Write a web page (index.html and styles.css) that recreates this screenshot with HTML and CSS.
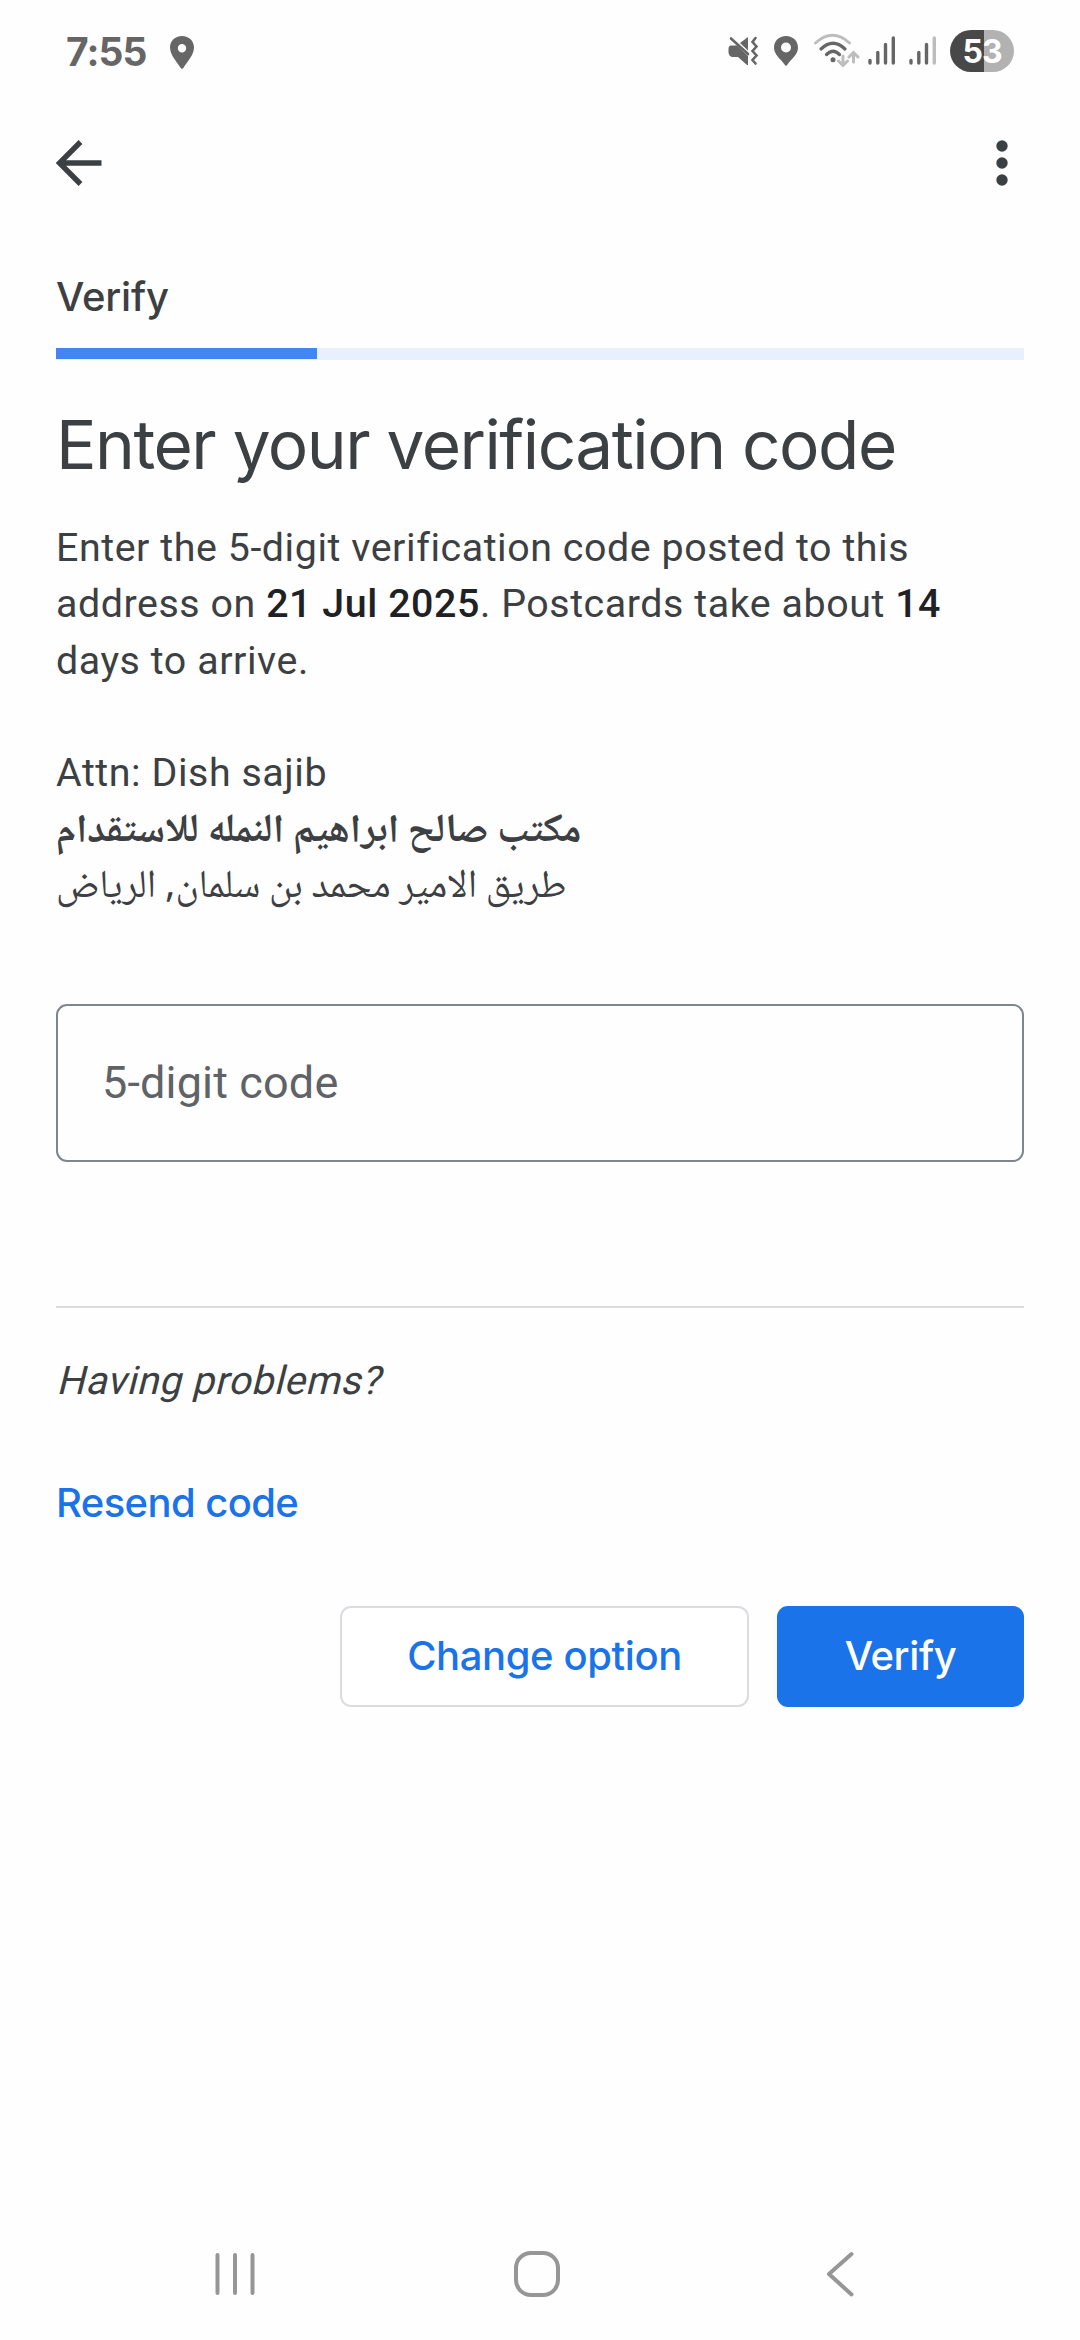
FILE: index.html
```html
<!DOCTYPE html>
<html lang="en">
<head>
<meta charset="utf-8">
<title>Verify</title>
<link rel="stylesheet" href="styles.css">
</head>
<body>
<header class="status">
  <span class="clock">7:55</span>
  <svg class="pin" width="24" height="33" viewBox="0 0 24 33"><path fill="#666" fill-rule="evenodd" d="M12 0C5 0 0 5 0 11.500C0 19 7 26 10.500 31.800Q12 34 13.500 31.800C17 26 24 19 24 11.500C24 5 19 0 12 0ZM12 8a4.200 4.200 0 1 1 0 8.400a4.200 4.200 0 1 1 0-8.400Z"/></svg>
  <svg class="indicators" width="212" height="40" viewBox="726 32 212 40" fill="none" stroke-linecap="round">
    <path fill="#666" d="M731 46.500h6l11 10.500v9h-1l-9-8h-6q-3-1-3.500-4v-4Q728.500 46.500 731 46.500ZM748 38v13.500l-8-7.500Z"/>
    <path stroke="#666" stroke-width="2.600" d="M731 39.500L748 55M755.500 39l-3 4 4 4.500-4 4.500 4 4.500-4 4.500 3 3.500"/>
    <path fill="#666" fill-rule="evenodd" d="M786 37c-7 0-12 5-12 11.500C774 56 781 60 784.500 65.500Q786 68 787.500 65.500C791 60 798 56 798 48.500C798 42 793 37 786 37ZM786 43.500a5 5 0 1 1 0 10a5 5 0 1 1 0-10Z"/>
    <path stroke="#bdbdbd" stroke-width="3" d="M815.500 44Q832.500 28.500 849.500 44M843 57v9m-4.500-4l4.500 4.500 4.500-4.500M853.500 63v-9m-4.500 4l4.500-4.500 4.500 4.500"/>
    <path stroke="#666" stroke-width="3.200" d="M821 50Q833 38.500 845 50M826.500 55.500Q833 49 839.500 55.500"/>
    <circle cx="833" cy="60.700" r="2.500" fill="#666"/>
    <path stroke="#666" stroke-width="3.400" d="M870 61.500v2.500M877.800 53.500v10.500M885.500 45.500v18.500M893.300 39v25M911 61.500v2.500M918.800 53.500v10.500M926.500 45.500v18.500"/>
    <path stroke="#bdbdbd" stroke-width="3.400" d="M934.300 39v25"/>
  </svg>
  <span class="battery">53</span>
</header>
<nav class="appbar">
  <svg width="46" height="46" viewBox="0 0 46 46" fill="none" stroke="#3c4043" stroke-width="5.400"><path d="M45.500 23H5M24.500 2L3.500 23l21 21"/></svg>
  <svg width="12" height="46" viewBox="0 0 12 46" fill="#3c4043"><circle cx="6" cy="6" r="5.700"/><circle cx="6" cy="23" r="5.700"/><circle cx="6" cy="40" r="5.700"/></svg>
</nav>
<main class="content">
  <div class="step">Verify</div>
  <div class="progress"><div class="progress-fill"></div></div>
  <h1 class="title">Enter your verification code</h1>
  <p class="body">Enter the 5-digit verification code posted to this<br>address on <b>21 Jul 2025</b>. Postcards take about <b>14</b><br>days to arrive.</p>
  <address class="address">
    <div class="line">Attn: Dish sajib</div>
    <div class="line arabic name" lang="ar" dir="rtl">مكتب صالح ابراهيم النمله للاستقدام</div>
    <div class="line arabic" lang="ar" dir="rtl">طريق الامير محمد بن سلمان, الرياض</div>
  </address>
  <div class="field">5-digit code</div>
  <hr class="rule">
  <p class="problems">Having problems?</p>
  <a class="resend">Resend code</a>
  <div class="actions">
    <button class="btn outline">Change option</button>
    <button class="btn solid">Verify</button>
  </div>
</main>
<footer class="sysnav">
  <svg width="640" height="50" viewBox="215 2249 640 50" fill="none" stroke="#969696" stroke-width="4" stroke-linecap="round" stroke-linejoin="round"><path d="M217.500 2255v38M235 2255v38M252.500 2255v38M851.500 2254L829 2274l22.500 20.500"/><rect x="516" y="2253" width="42" height="42" rx="15"/></svg>
</footer>
</body>
</html>
```
FILE: styles.css
```css
* { box-sizing: border-box; margin: 0; padding: 0; }
body {
  width: 1080px; height: 2340px; display: flex; flex-direction: column;
  background: #fefefe; color: #3c4043; font-family: Roboto, sans-serif; overflow: hidden;
}
.status { height: 102px; padding: 0 66px; display: flex; align-items: center; color: #666; font-family: Inter, sans-serif; }
.clock { width: 80px; font-size: 39px; font-weight: 700; letter-spacing: -.9px; white-space: nowrap; }
.pin { margin: 3px 0 0 24px; }
.indicators { margin-left: auto; margin-right: 12px; }
.battery {
  width: 64px; height: 42px; border-radius: 21px; display: flex; align-items: center; justify-content: center;
  background: linear-gradient(to right, #484848 34px, #b2b2b2 34px); color: #fff;
  font-size: 32px; font-weight: 700; letter-spacing: -1px;
}
.appbar { height: 121px; padding: 0 72px 0 56px; display: flex; align-items: center; justify-content: space-between; }
.content { padding: 0 56px; display: flex; flex-direction: column; }
.step { margin-top: 49px; height: 50px; font: 500 40px/50px Inter, sans-serif; letter-spacing: -.2px; }
.progress { margin-top: 26px; height: 12px; background: #e8f0fe; }
.progress-fill { width: 27%; height: 11px; background: #4285f4; }
.title { margin-top: 45px; font: 400 67.500px/80px Inter, sans-serif; letter-spacing: -1.500px; white-space: nowrap; }
.body, .address { font-size: 39.375px; line-height: 56.250px; letter-spacing: .56px; font-style: normal; }
.body { margin-top: 35px; white-space: nowrap; }
.body b { font-weight: 500; color: #202124; }
.address { margin-top: 56px; }
.line { height: 56.250px; }
.arabic { padding-top: 2px; font-family: "Noto Naskh Arabic UI", "Noto Naskh Arabic", Roboto, sans-serif; letter-spacing: 0; text-align: left; }
.name { padding-top: 3px; font-size: 39.800px; font-weight: 700; }
.field { margin-top: 90px; height: 158px; padding-left: 44px; border: 2px solid #80868b; border-radius: 11px; font-size: 45px; line-height: 154px; letter-spacing: .15px; color: #5f6368; }
.rule { margin-top: 144px; border: 0; height: 2px; background: #dadce0; }
/* Slanted upright face, sheared about its baseline */
.problems { margin-top: 45px; font-size: 39.375px; line-height: 56px; letter-spacing: .56px; transform: skewX(-14deg); transform-origin: 0 42px; }
.resend { margin-top: 66px; font: 500 40px/56px Inter, sans-serif; letter-spacing: -.6px; color: #1a73e8; }
.actions { margin-top: 75px; display: flex; justify-content: flex-end; gap: 28px; }
.btn { height: 101px; border-radius: 11px; font: 500 40px/56px Inter, sans-serif; letter-spacing: -.4px; }
.outline { width: 409px; border: 2px solid #dadce0; background: #fff; color: #1a73e8; }
.solid { width: 247px; border: 0; background: #1a73e8; color: #fff; }
.sysnav { margin-top: auto; height: 132px; padding-left: 215px; display: flex; align-items: center; }
```
